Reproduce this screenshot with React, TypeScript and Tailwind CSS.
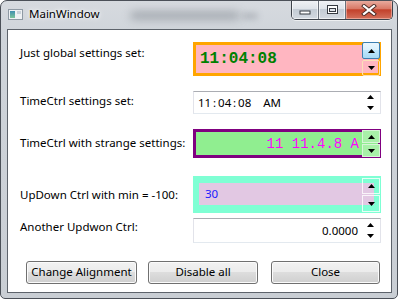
import React from "react";

const UI = "font-['Segoe_UI','Noto_Sans',sans-serif] text-[11.5px] leading-[16px] text-black";

function Tri({ up }: { up?: boolean }) {
  return (
    <svg width="7" height="4" viewBox="0 0 7 4" className="block">
      <path d={up ? "M0 4 L3.5 0 L7 4Z" : "M0 0 L7 0 L3.5 4Z"} fill="#000" />
    </svg>
  );
}

function AppIcon() {
  return (
    <svg width="15" height="11" viewBox="0 0 15 11" className="block">
      <defs>
        <linearGradient id="ig" x1="0" y1="0" x2="0" y2="1">
          <stop offset="0" stopColor="#3f8fb0" />
          <stop offset="1" stopColor="#7cc59a" />
        </linearGradient>
      </defs>
      <rect x="0.5" y="0.5" width="14" height="10" fill="#eef1f4" stroke="#8f9aa4" />
      <rect x="2" y="2" width="5" height="7" fill="url(#ig)" />
      <rect x="9" y="2" width="4" height="3" fill="#c9d2da" />
    </svg>
  );
}

function CaptionButtons() {
  return (
    <div className="flex h-[20px] -mt-[1px] rounded-b-[5px] border border-t-0 border-[#3d434b] overflow-hidden shadow-[0_1px_0_rgba(255,255,255,0.6)]">
      <div className="w-[27px] h-full flex items-end justify-center pb-[4px] bg-[linear-gradient(180deg,#f1f3f6_0%,#dfe4ea_45%,#c4ccd5_50%,#d3d9e0_100%)] border-r border-[#69707a] shadow-[inset_0_0_0_1px_rgba(255,255,255,0.6)]">
        <svg width="12" height="5" viewBox="0 0 12 5" className="block">
          <rect x="1" y="1" width="10" height="3" fill="#fff" stroke="#353a41" strokeWidth="1" />
        </svg>
      </div>
      <div className="w-[27px] h-full flex items-center justify-center bg-[linear-gradient(180deg,#f1f3f6_0%,#dfe4ea_45%,#c4ccd5_50%,#d3d9e0_100%)] border-r border-[#69707a] shadow-[inset_0_0_0_1px_rgba(255,255,255,0.6)]">
        <svg width="11" height="9" viewBox="0 0 11 9" className="block">
          <rect x="0.5" y="0.5" width="10" height="8" fill="#fff" stroke="#353a41" />
          <rect x="2.5" y="3.5" width="6" height="3" fill="#dfe3e8" stroke="#353a41" />
        </svg>
      </div>
      <div className="w-[46px] h-full flex items-center justify-center bg-[linear-gradient(180deg,#eab0a4_0%,#d97a68_45%,#c2412b_52%,#d3705b_100%)] shadow-[inset_0_0_0_1px_rgba(255,210,200,0.5)]">
        <svg width="16" height="12" viewBox="0 0 16 12" className="block">
          <path d="M3 2 L13 10 M13 2 L3 10" stroke="#4a2a24" strokeWidth="4" strokeLinecap="square" />
          <path d="M3 2 L13 10 M13 2 L3 10" stroke="#fff" strokeWidth="2.2" strokeLinecap="square" />
        </svg>
      </div>
    </div>
  );
}

function WinButton({ label, w, ml }: { label: string; w: string; ml: string }) {
  return (
    <div
      className={`${w} ${ml} h-[23px] rounded-[3px] border border-[#707070] flex items-center justify-center bg-[linear-gradient(180deg,#f2f2f2_0%,#ebebeb_50%,#dddddd_50%,#cfcfcf_100%)] shadow-[inset_0_0_0_1px_#fbfbfb]`}
    >
      <span className="pb-[1px]">{label}</span>
    </div>
  );
}

export default function App() {
  return (
    <div className="w-[400px] h-[300px] bg-white">
      <div className="w-[398px] h-[299px] rounded-t-[7px] rounded-b-[5px] border border-[#4b5058] bg-[linear-gradient(180deg,#d6dadf_0%,#cfd4da_12%,#c9ced4_100%)] flex flex-col overflow-hidden">
        {/* title bar */}
        <div className="h-[28px] flex items-start shrink-0">
          <div className="ml-[7px] mt-[8px]">
            <AppIcon />
          </div>
          <div className={`${UI} ml-[6px] mt-[5px] [text-shadow:0_0_6px_#fff,0_0_3px_#fff]`}>MainWindow</div>
          <div className="ml-[30px] mt-[10px] w-[110px] h-[9px] rounded-full bg-[#7d838b] opacity-50 blur-[4px]" />
          <div className="ml-[2px] mt-[12px] w-[16px] h-[6px] rounded-full bg-[#7d838b] opacity-40 blur-[3px]" />
          <div className="ml-auto mr-[4px]">
            <CaptionButtons />
          </div>
        </div>

        {/* client area */}
        <div className={`${UI} ml-[6px] w-[385px] h-[264px] border border-[#5d636b] bg-white flex flex-col pl-[12px] pt-[12px]`}>
          {/* row 1 */}
          <div className="flex h-[34px]">
            <div className="w-[173px] pt-[3px]">Just global settings set:</div>
            <div className="relative w-[188px] h-[34px] bg-[#FFA500] p-[3px]">
              <div className="h-full bg-[#FFB6C1] flex items-center pl-[4px]">
                <span className="font-['Liberation_Mono',monospace] font-bold text-[16px] leading-[18px] text-[#008000]">11:04:08</span>
              </div>
              <div className="absolute top-0 right-[1px] w-[18px] flex flex-col">
                <div className="h-[17px] border border-[#3c7fb1] rounded-[2px] bg-[linear-gradient(180deg,#eaf6fd_0%,#d9f0fc_50%,#bee6fd_50%,#a7d9f5_100%)] flex items-center justify-center">
                  <Tri up />
                </div>
                <div className="h-[16px] mt-[1px] border border-[#fbe0b8] rounded-[2px] flex items-center justify-center">
                  <Tri />
                </div>
              </div>
            </div>
          </div>

          {/* row 2 */}
          <div className="flex h-[23px] mt-[15px]">
            <div className="w-[173px] pt-[2px]">TimeCtrl settings set:</div>
            <div className="w-[188px] h-[23px] border border-t-[#abadb3] border-x-[#e2e3ea] border-b-[#e3e9ef] bg-white flex items-center">
              <span className="pl-[4px] flex-1 whitespace-pre">{"11\u2009:\u200904\u2009:\u200908    AM"}</span>
              <div className="w-[18px] mr-[1px] h-full flex flex-col items-center justify-between pt-[3px] pb-[3px]">
                <Tri up />
                <Tri />
              </div>
            </div>
          </div>

          {/* row 3 */}
          <div className="flex h-[29px] mt-[15px]">
            <div className="w-[173px] pt-[6px]">TimeCtrl with strange settings:</div>
            <div className="relative w-[188px] h-[29px] border-[3px] border-[#800080] bg-[#90EE90] flex items-center justify-end pr-[19px]">
              <span className="font-['Liberation_Mono',monospace] text-[14px] leading-[16px] text-[#FF00FF]">11 11.4.8 A</span>
              <div className="absolute -top-[2px] -right-[2px] w-[18px] flex flex-col">
                <div className="h-[13px] border border-[#d8f5d8] bg-[#a8f0a8] flex items-center justify-center">
                  <Tri up />
                </div>
                <div className="h-[13px] mt-[1px] border border-[#d8f5d8] bg-[#a8f0a8] flex items-center justify-center">
                  <Tri />
                </div>
              </div>
            </div>
          </div>

          {/* row 4 */}
          <div className="flex h-[37px] mt-[18px]">
            <div className="w-[173px] pt-[11px]">UpDown Ctrl with min = -100:</div>
            <div className="relative w-[188px] h-[37px] bg-[#7FFFD4] pl-[6px] pr-[7px] pt-[7px] pb-[8px]">
              <div className="h-full bg-[#E2C8E3] flex items-center pl-[6px]">
                <span className="text-[#1a1aff]">30</span>
              </div>
              <div className="absolute top-[2px] right-[1px] w-[18px] flex flex-col">
                <div className="h-[16px] border border-white/80 flex items-center justify-center">
                  <Tri up />
                </div>
                <div className="h-[17px] mt-[1px] border border-white/80 flex items-center justify-center">
                  <Tri />
                </div>
              </div>
            </div>
          </div>

          {/* row 5 */}
          <div className="flex h-[25px] mt-[5px]">
            <div className="w-[173px] pt-[1px]">Another Updwon Ctrl:</div>
            <div className="w-[188px] h-[25px] border border-t-[#abadb3] border-x-[#e2e3ea] border-b-[#e3e9ef] bg-white flex items-center">
              <span className="flex-1 text-right pr-[3px]">0.0000</span>
              <div className="w-[18px] mr-[1px] h-full flex flex-col items-center justify-between pt-[4px] pb-[4px]">
                <Tri up />
                <Tri />
              </div>
            </div>
          </div>

          {/* buttons */}
          <div className="flex mt-[18px]">
            <WinButton label="Change Alignment" w="w-[111px]" ml="ml-[6px]" />
            <WinButton label="Disable all" w="w-[110px]" ml="ml-[11px]" />
            <WinButton label="Close" w="w-[109px]" ml="ml-[13px]" />
          </div>
        </div>
      </div>
    </div>
  );
}
